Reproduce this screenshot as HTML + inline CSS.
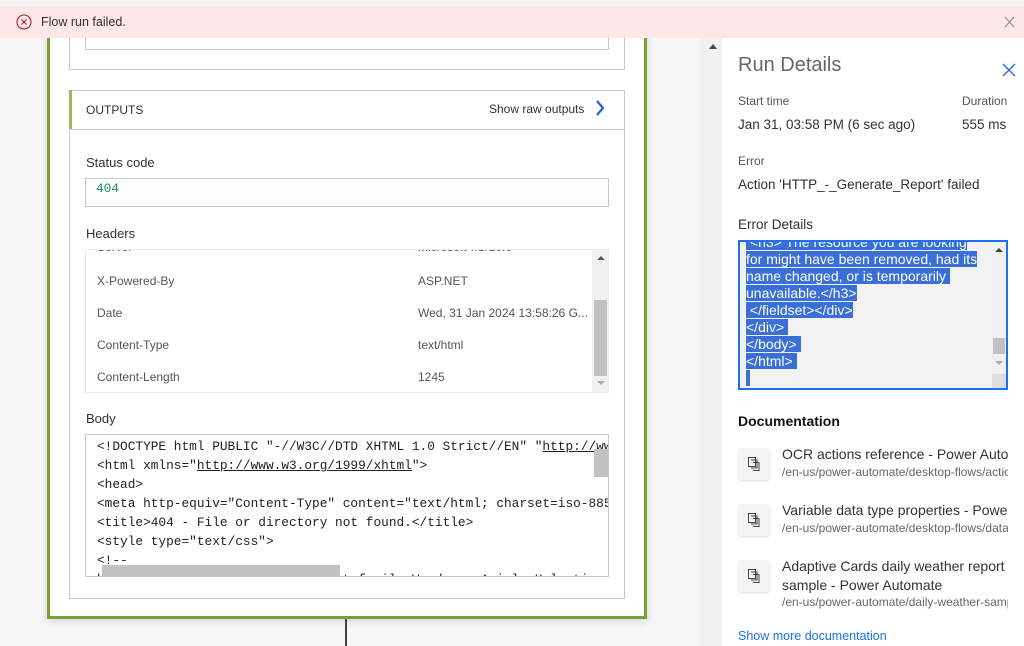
<!DOCTYPE html>
<html><head><meta charset="utf-8">
<style>
*{box-sizing:border-box;margin:0;padding:0}
body{width:1024px;height:646px;overflow:hidden;background:#f7f7f7;font-family:"Liberation Sans",sans-serif;position:relative;color:#333}
.a{position:absolute}
.lbl{font-size:13px;color:#323130}
.mono{font-family:"Liberation Mono",monospace;font-size:12.8px;color:#222;white-space:pre;line-height:19px}
.sel{background:#3a6fd8;color:#fff}
</style></head><body>
<div class="a" style="left:0;top:0;width:1024px;height:6px;background:#f4f4f4"></div>
<div class="a" style="left:47px;top:20px;width:600px;height:599px;background:#fff;border:3px solid #7aa032;border-top:none;box-shadow:0 2px 8px rgba(0,0,0,.15)"></div>
<div class="a" style="left:69px;top:20px;width:556px;height:50px;border:1px solid #c8c8c8;border-top:none"></div>
<div class="a" style="left:85px;top:20px;width:524px;height:30px;border:1px solid #c8c8c8;border-top:none"></div>
<div class="a" style="left:69px;top:90px;width:556px;height:509px;border:1px solid #c8c8c8"></div>
<div class="a" style="left:69px;top:90px;width:3px;height:39px;background:#9bbb59"></div>
<div class="a" style="left:69px;top:129px;width:556px;height:1px;background:#c8c8c8"></div>
<div class="a lbl" style="left:86px;top:103px;font-size:12px">OUTPUTS</div>
<div class="a lbl" style="left:489px;top:102px;font-size:12px">Show raw outputs</div>
<svg class="a" style="left:594px;top:99px" width="12" height="18" viewBox="0 0 12 18"><path d="M3 2 L9 9 L3 16" stroke="#1a5fd6" stroke-width="2.2" fill="none"/></svg>
<div class="a lbl" style="left:86px;top:155px">Status code</div>
<div class="a" style="left:85px;top:178px;width:524px;height:29px;border:1px solid #c8c8c8;background:#fdfdfb"></div>
<div class="a mono" style="left:96px;top:179px;color:#1b8a6a">404</div>
<div class="a lbl" style="left:86px;top:226px">Headers</div>
<div class="a" style="left:85px;top:249px;width:524px;height:144px;border:1px solid #f1e6e9;overflow:hidden;font-size:12px;color:#555">
 <div class="a" style="left:11px;top:-10px">Server</div><div class="a" style="left:332px;top:-10px">Microsoft-IIS/10.0</div>
 <div class="a" style="left:11px;top:24px">X-Powered-By</div><div class="a" style="left:332px;top:24px">ASP.NET</div>
 <div class="a" style="left:11px;top:56px">Date</div><div class="a" style="left:332px;top:56px">Wed, 31 Jan 2024 13:58:26 G...</div>
 <div class="a" style="left:11px;top:88px">Content-Type</div><div class="a" style="left:332px;top:88px">text/html</div>
 <div class="a" style="left:11px;top:120px">Content-Length</div><div class="a" style="left:332px;top:120px">1245</div>
 <div class="a" style="left:506px;top:0;width:17px;height:142px;background:#f1f1f1"></div>
 <div class="a" style="left:508px;top:50px;width:13px;height:76px;background:#c1c1c1"></div>
 <div class="a" style="left:511px;top:6px;border:4px solid transparent;border-bottom:4px solid #555;border-top:0"></div>
 <div class="a" style="left:511px;top:131px;border:4px solid transparent;border-top:4px solid #aaa;border-bottom:0"></div>
</div>
<div class="a lbl" style="left:86px;top:411px">Body</div>
<div class="a" style="left:85px;top:434px;width:524px;height:143px;border:1px solid #c8c8c8;overflow:hidden">
 <div class="a mono" style="left:11px;top:2px">&lt;!DOCTYPE html PUBLIC "-//W3C//DTD XHTML 1.0 Strict//EN" "<u>http://www</u>
&lt;html xmlns="<u>http://www.w3.org/1999/xhtml</u>"&gt;
&lt;head&gt;
&lt;meta http-equiv="Content-Type" content="text/html; charset=iso-8859
&lt;title&gt;404 - File or directory not found.&lt;/title&gt;
&lt;style type="text/css"&gt;
&lt;!--
body{margin:0;font-size:.7em;font-family:Verdana, Arial, Helvetica</div>
 <div class="a" style="left:508px;top:14px;width:14px;height:28px;background:#c1c1c1"></div>
 <div class="a" style="left:16px;top:130px;width:238px;height:12px;background:#c1c1c1"></div>
</div>
<div class="a" style="left:345px;top:619px;width:2px;height:27px;background:#444"></div>
<div class="a" style="left:700px;top:38px;width:22px;height:608px;background:#f1f1f1"></div>
<div class="a" style="left:709px;top:44px;border:4px solid transparent;border-bottom:5px solid #444;border-top:0"></div>
<div class="a" style="left:722px;top:38px;width:302px;height:608px;background:#fff"></div>
<div class="a" style="left:738px;top:54px;font-size:20px;color:#666">Run Details</div>
<svg class="a" style="left:1002px;top:63px" width="14" height="14" viewBox="0 0 14 14"><path d="M1 1L13 13M13 1L1 13" stroke="#2a6ae0" stroke-width="1.4"/></svg>
<div class="a lbl" style="left:738px;top:94px;font-size:12px;color:#555">Start time</div>
<div class="a lbl" style="left:962px;top:94px;font-size:12px;color:#555">Duration</div>
<div class="a lbl" style="left:738px;top:117px;font-size:13.5px">Jan 31, 03:58 PM (6 sec ago)</div>
<div class="a lbl" style="left:962px;top:117px;font-size:13.5px">555 ms</div>
<div class="a lbl" style="left:738px;top:154px;font-size:12px;color:#555">Error</div>
<div class="a lbl" style="left:738px;top:177px;font-size:13.5px">Action 'HTTP_-_Generate_Report' failed</div>
<div class="a lbl" style="left:738px;top:217px;font-size:13.5px">Error Details</div>
<div class="a" style="left:738px;top:240px;width:270px;height:150px;border:2px solid #1f6ff5;background:#f2f2f2;overflow:hidden;font-size:14px;line-height:17px">
 <div class="a" style="left:6px;top:-8px"><span class="sel">&nbsp;&lt;h3&gt; The resource you are looking</span><br><span class="sel">for might have been removed, had its</span><br><span class="sel">name changed, or is temporarily&nbsp;</span><br><span class="sel">unavailable.&lt;/h3&gt;</span><br><span class="sel">&nbsp;&lt;/fieldset&gt;&lt;/div&gt;</span><br><span class="sel">&lt;/div&gt;&nbsp;</span><br><span class="sel">&lt;/body&gt;&nbsp;</span><br><span class="sel">&lt;/html&gt;&nbsp;</span><br><span class="sel">&nbsp;</span></div>
 <div class="a" style="left:252px;top:0;width:14px;height:146px;background:#f1f1f1"></div>
 <div class="a" style="left:253px;top:96px;width:12px;height:16px;background:#c1c1c1"></div>
 <div class="a" style="left:255px;top:6px;border:4px solid transparent;border-bottom:4px solid #444;border-top:0"></div>
 <div class="a" style="left:255px;top:119px;border:4px solid transparent;border-top:4px solid #aaa;border-bottom:0"></div>
 <div class="a" style="left:252px;top:132px;width:14px;height:14px;background:#ddd"></div>
</div>
<div class="a" style="left:738px;top:413px;font-size:14px;font-weight:bold;color:#111">Documentation</div>
<div class="a" style="left:738px;top:448px;width:32px;height:32px;background:#f4f4f4;border-radius:3px;box-shadow:0 1px 2px rgba(0,0,0,.12)"></div>
<div class="a" style="left:738px;top:504px;width:32px;height:32px;background:#f4f4f4;border-radius:3px;box-shadow:0 1px 2px rgba(0,0,0,.12)"></div>
<div class="a" style="left:738px;top:560px;width:32px;height:32px;background:#f4f4f4;border-radius:3px;box-shadow:0 1px 2px rgba(0,0,0,.12)"></div>
<svg class="a" style="left:747px;top:456px" width="14" height="16" viewBox="0 0 14 16"><path d="M1.5 1.5h7v9h-7z M4 4h6v8H4 M6 6.5h6v8H6" fill="none" stroke="#444" stroke-width="1"/></svg>
<svg class="a" style="left:747px;top:512px" width="14" height="16" viewBox="0 0 14 16"><path d="M1.5 1.5h7v9h-7z M4 4h6v8H4 M6 6.5h6v8H6" fill="none" stroke="#444" stroke-width="1"/></svg>
<svg class="a" style="left:747px;top:568px" width="14" height="16" viewBox="0 0 14 16"><path d="M1.5 1.5h7v9h-7z M4 4h6v8H4 M6 6.5h6v8H6" fill="none" stroke="#444" stroke-width="1"/></svg>
<div class="a" style="left:782px;top:446px;width:226px;overflow:hidden;white-space:nowrap;font-size:14px;color:#333">OCR actions reference - Power Automate<div style="font-size:12px;color:#666;margin-top:3px">/en-us/power-automate/desktop-flows/actions</div></div>
<div class="a" style="left:782px;top:502px;width:226px;overflow:hidden;white-space:nowrap;font-size:14px;color:#333">Variable data type properties - Power Automate<div style="font-size:12px;color:#666;margin-top:3px">/en-us/power-automate/desktop-flows/datatypes</div></div>
<div class="a" style="left:782px;top:557px;width:226px;overflow:hidden;white-space:nowrap;font-size:14px;color:#333;line-height:19px">Adaptive Cards daily weather report<br>sample - Power Automate<div style="font-size:12px;color:#666;line-height:15px">/en-us/power-automate/daily-weather-sample</div></div>
<div class="a" style="left:738px;top:629px;font-size:12.5px;color:#1a73e8">Show more documentation</div>
<div class="a" style="left:0;top:6px;width:1024px;height:32px;background:#fde7e9"></div>
<svg class="a" style="left:16px;top:14px" width="16" height="16" viewBox="0 0 16 16"><circle cx="8" cy="8" r="7" fill="none" stroke="#a4262c" stroke-width="1.1"/><path d="M5.5 5.5L10.5 10.5M10.5 5.5L5.5 10.5" stroke="#a4262c" stroke-width="1.1"/></svg>
<div class="a" style="left:41px;top:15px;font-size:12.5px;color:#323130">Flow run failed.</div>
<svg class="a" style="left:1004px;top:16px" width="11" height="12" viewBox="0 0 11 12"><path d="M1 1L10 11M10 1L1 11" stroke="#888" stroke-width="1"/></svg>
</body></html>
